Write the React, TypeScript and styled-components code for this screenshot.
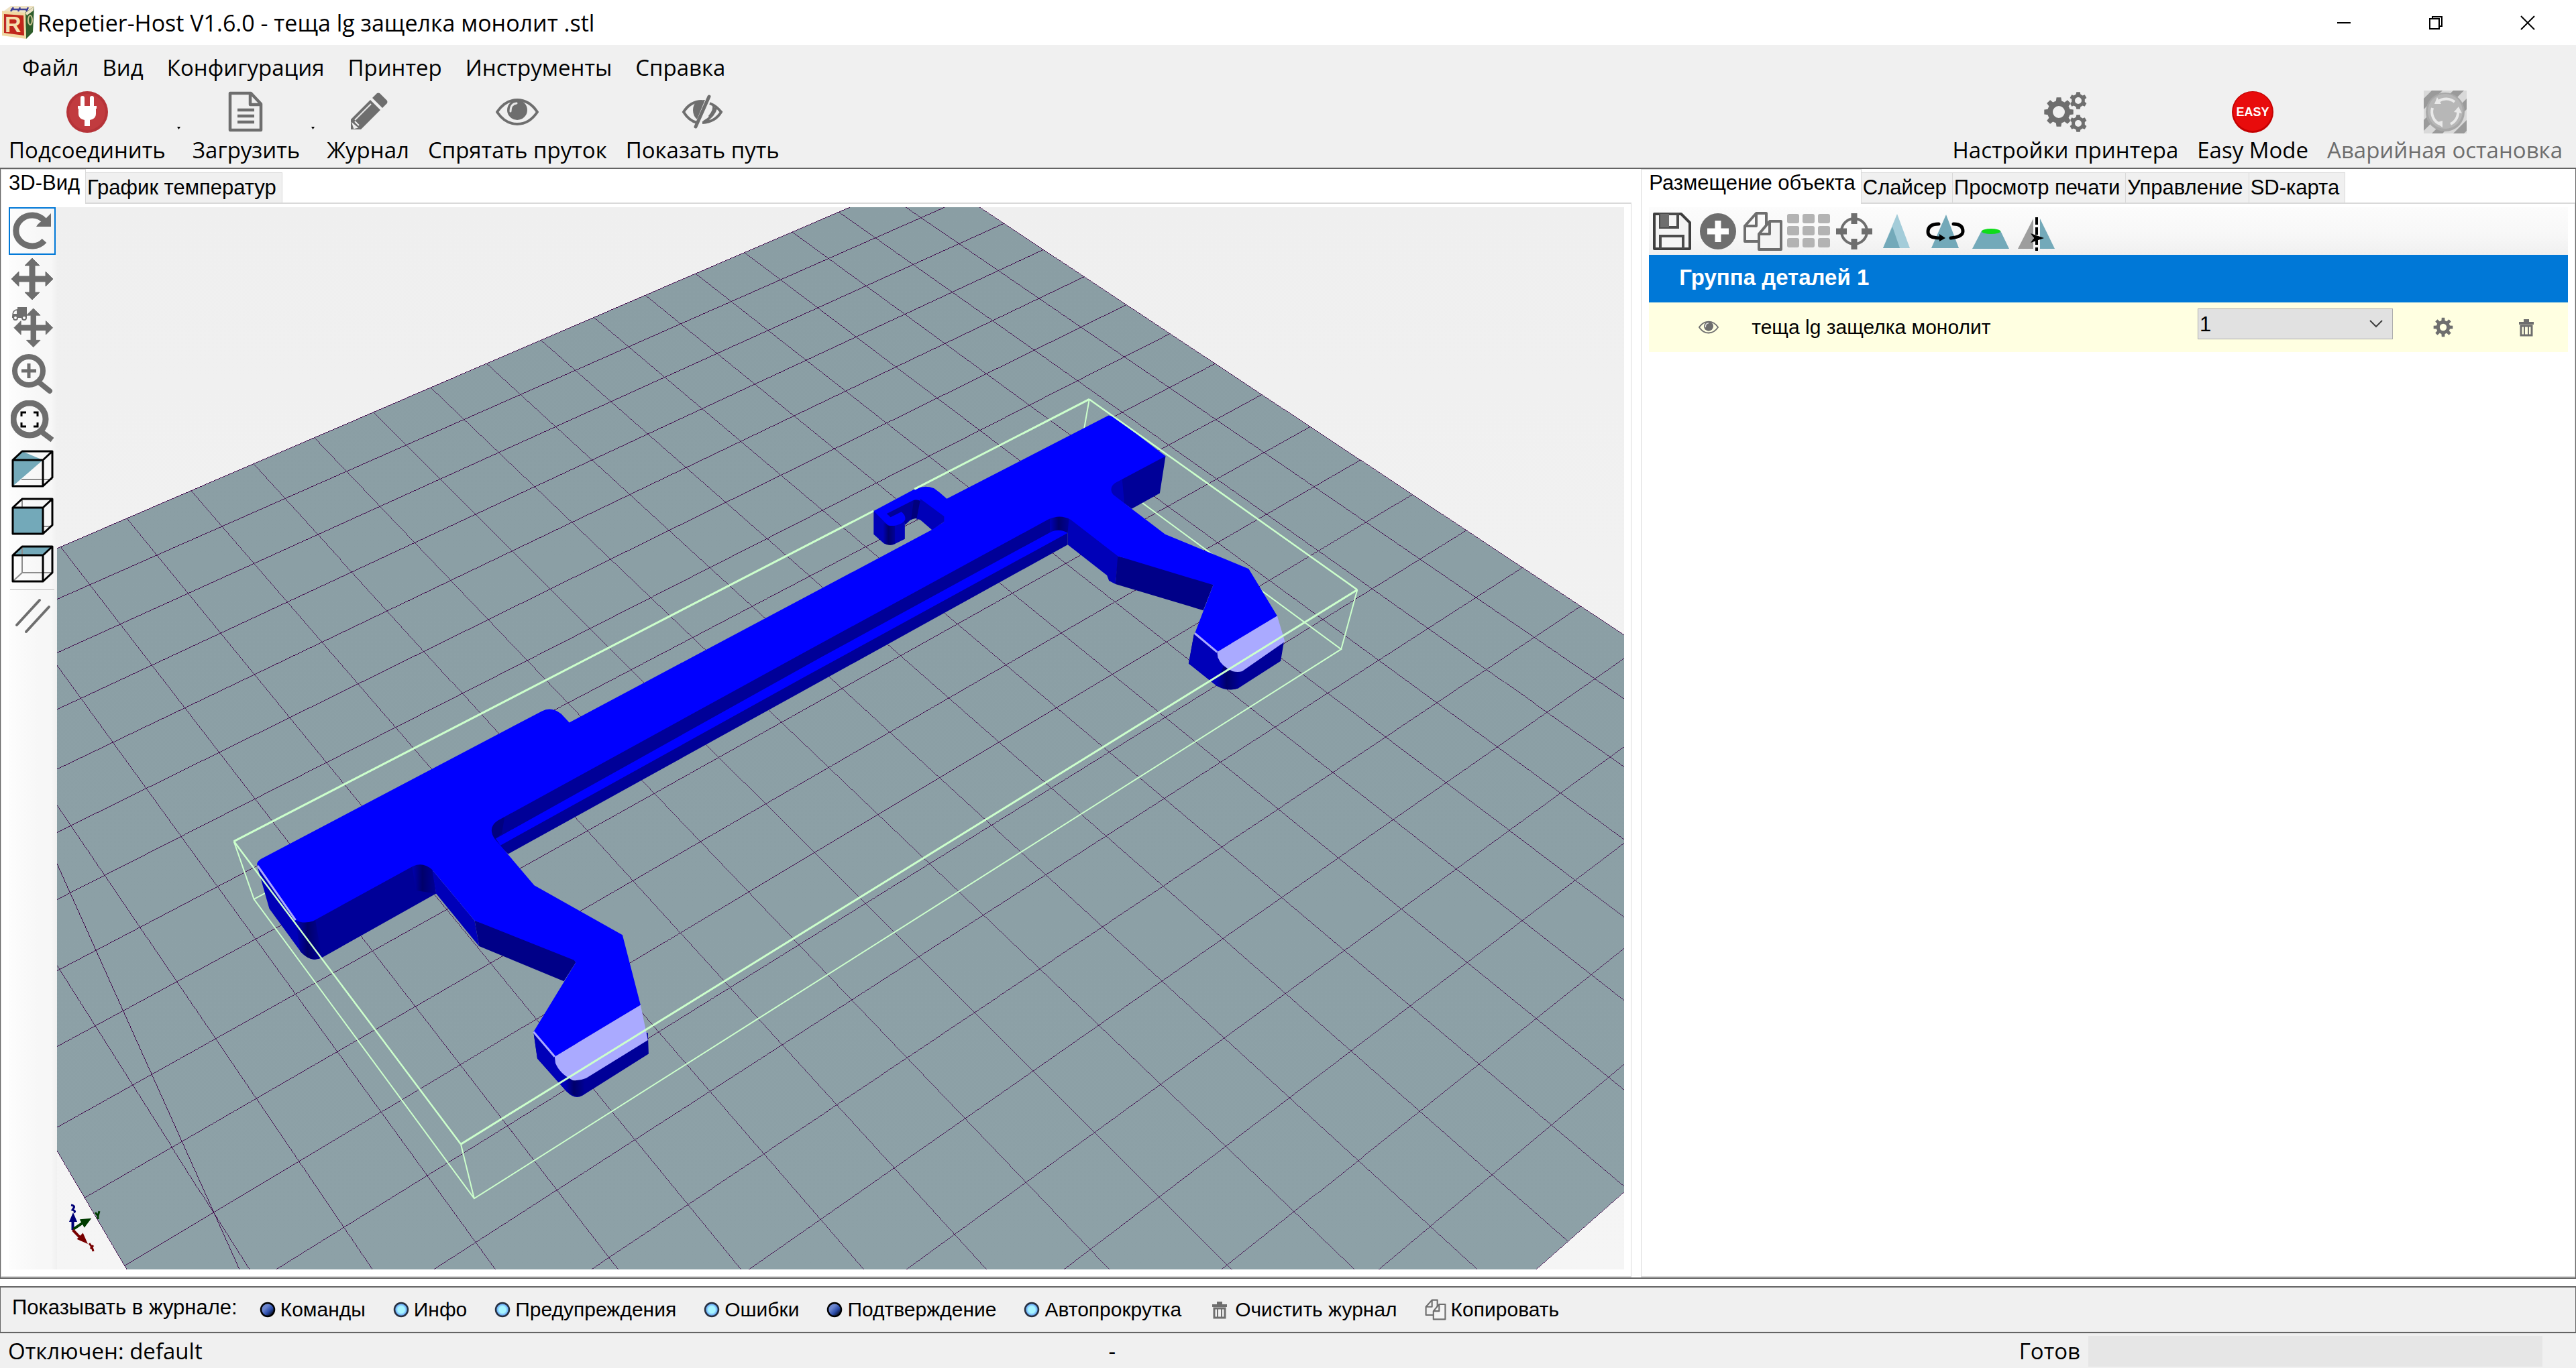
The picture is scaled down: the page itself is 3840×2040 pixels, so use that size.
import React from "react";
import styled, { createGlobalStyle, css } from "styled-components";

const UI_FONT = '"Open Sans", "Noto Sans", sans-serif';
const FORM_FONT = '"Liberation Sans", Arial, sans-serif';
const DARK_LINE = "#646464";
const LIGHT_LINE = "#d9d9d9";
const GRAY = "#6e6e6e";
const TEAL = "#73a9b9";

const GlobalStyle = createGlobalStyle`
  *, *::before, *::after { box-sizing: border-box; }
  body { margin: 0; background: #f0f0f0; color: #000; font-family: ${UI_FONT}; font-size: 33px; }
  button, select { font: inherit; color: inherit; border: 0; padding: 0; margin: 0; background: none; border-radius: 0; }
  svg { display: block; flex: none; }
`;

const Window = styled.div`
  display: flex;
  flex-direction: column;
  width: 100%;
  height: 100vh;
  overflow: hidden;
  white-space: nowrap;
`;

/* ---------- title bar ---------- */

const TitleBar = styled.header`
  display: flex;
  align-items: center;
  flex: none;
  height: 67px;
  padding: 0 4px 0 2px;
  background: #fff;
`;

const Title = styled.h1`
  flex: 1;
  margin: 0;
  padding-left: 3px;
  font-size: 34px;
  font-weight: 400;
  line-height: 68px;
`;

const WindowButton = styled.button`
  display: grid;
  place-items: center;
  width: 137px;
  height: 64px;
`;

/* ---------- menu and main toolbar ---------- */

const MenuBar = styled.nav`
  display: flex;
  flex: none;
  gap: 35px;
  height: 66px;
  padding-left: 33px;
`;

const MenuItem = styled.button`
  line-height: 68px;
`;

const MainToolbar = styled.div`
  display: flex;
  justify-content: space-between;
  flex: none;
  height: 117px;
  padding: 2px 7px 0 0;
`;

const ToolGroup = styled.div`
  display: flex;
  gap: 2px;
`;

const ToolButton = styled.button`
  display: flex;
  flex-direction: column;
  align-items: center;
  padding: 0 13px;
  line-height: 50px;
  &:disabled { color: ${GRAY}; }
`;

const DropArrow = styled.button`
  width: 10px;
  padding-top: 54px;
  align-self: flex-start;
`;

/* ---------- work area ---------- */

const WorkArea = styled.main`
  display: grid;
  grid-template-columns: minmax(0, 2430fr) minmax(0, 1392fr);
  gap: 14px;
  flex: 1;
  min-height: 0;
  border: solid ${DARK_LINE};
  border-width: 2px 1px;
  background: #fff;
`;

const Pane = styled.section`
  display: flex;
  flex-direction: column;
  min-width: 0;
  min-height: 0;
`;

const TabStrip = styled.div`
  display: flex;
  align-items: flex-end;
  flex: none;
  height: 52px;
  font-family: ${FORM_FONT};
  font-size: 31px;
`;

const StripFill = styled.div`
  flex: 1;
  border-bottom: 2px solid ${LIGHT_LINE};
`;

const Tab = styled.button<{ $active?: boolean }>`
  height: 47px;
  padding: 0 8px 0 2px;
  line-height: 42px;
  background: #f0f0f0;
  border: 1px solid ${LIGHT_LINE};
  border-width: 1px 1px 2px 0;
  ${(p) =>
    p.$active &&
    css`
      height: 52px;
      padding: 0 8px 12px 11px;
      line-height: 38px;
      background: #fff;
      border-width: 1px 1px 0 1px;
    `}
`;

const Page = styled.div<{ $column?: boolean }>`
  display: flex;
  flex-direction: ${(p) => (p.$column ? "column" : "row")};
  flex: 1;
  min-height: 0;
  padding: 5px 10px 10px 11px;
  border: 1px solid ${LIGHT_LINE};
  border-width: 0 1px 2px;
`;

const SideBar = styled.div`
  display: flex;
  flex-direction: column;
  flex: none;
  width: 72px;
  background: linear-gradient(90deg, #fdfdfd, #f7f7f7 60%, #f7f7f7 88%, #f0f0f0);
`;

const SideButton = styled.button<{ $on?: boolean }>`
  display: grid;
  place-items: center;
  width: 70px;
  height: 71px;
  border: 2px solid ${(p) => (p.$on ? "#0078d7" : "transparent")};
`;

const SideRule = styled.hr`
  width: 66px;
  margin: 2px;
  border: 0;
  border-top: 1px solid #bdbdbd;
`;

const Viewport = styled.div`
  flex: 1;
  min-width: 0;
  background: linear-gradient(#efefef, #f5f5f5);
  > svg { width: 100%; height: 100%; }
`;

/* ---------- object placement ---------- */

const ObjectToolbar = styled.div`
  display: flex;
  flex: none;
  height: 71px;
  background: linear-gradient(#fcfcfc, #f7f7f7 60%, #f0f0f0);
`;

const ObjectButton = styled.button`
  display: grid;
  place-items: center;
  width: 68px;
`;

const GroupHeader = styled.h2`
  flex: none;
  margin: 0;
  padding: 0 45px;
  color: #fff;
  background: #0078d7;
  font: bold 33px/68px ${FORM_FONT};
  height: 71px;
`;

const ObjectRow = styled.div`
  display: grid;
  grid-template-columns: 128px minmax(0, 1fr) 291px 150px 98px;
  align-items: center;
  flex: none;
  height: 74px;
  padding: 0 13px 0 25px;
  background: #ffffe1;
  font-family: ${FORM_FONT};
  font-size: 30px;
`;

const RowButton = styled.button`
  display: grid;
  place-items: center;
  height: 60px;
`;

const CountBox = styled.div`
  position: relative;
  align-self: start;
  margin-top: 9px;
  > svg { position: absolute; right: 15px; top: 16px; pointer-events: none; }
`;

const CountSelect = styled.select`
  appearance: none;
  width: 100%;
  height: 46px;
  padding: 0 2px;
  border: 1px solid #adadad;
  background: #e1e1e1;
  font-size: 31px;
`;

/* ---------- log bar and status bar ---------- */

const LogBar = styled.div`
  display: flex;
  align-items: center;
  flex: none;
  gap: 41px;
  height: 70px;
  margin-top: 11px;
  padding: 0 17px;
  border: solid ${DARK_LINE};
  border-width: 2px 1px;
  background: #f0f0f0;
  font-family: ${FORM_FONT};
  font-size: 30px;
`;

const LogLabel = styled.span`
  margin-right: -8px;
  padding-bottom: 6px;
  font-size: 31px;
`;

const LogButton = styled.button`
  display: flex;
  align-items: center;
  gap: 7px;
  line-height: 40px;
`;

const StatusBar = styled.footer`
  display: grid;
  grid-template-columns: minmax(0, 1632fr) minmax(0, 1348fr) auto 677px;
  align-items: center;
  column-gap: 12px;
  flex: none;
  height: 52px;
  padding: 0 50px 0 12px;
  border-top: 1px solid #e0e0e0;
  line-height: 50px;
`;

const Progress = styled.progress`
  appearance: none;
  width: 100%;
  height: 46px;
  border: 0;
  background: #e6e6e6;
  &::-webkit-progress-bar { background: #e6e6e6; }
`;

const Below = styled.div`
  flex: none;
  background: #fff;
`;

/* ---------- icons ---------- */

const Svg = ({ s = 64, v = 64, children }: { s?: number; v?: number; children: React.ReactNode }) => (
  <svg width={s} height={s} viewBox={`0 0 ${v} ${v}`} fill="none" aria-hidden="true">
    {children}
  </svg>
);

const LogoIcon = () => (
  <Svg s={51} v={51}>
    <path d="M3 9 L14 1 L49 1 L47 10 L33 12Z" fill="#efe3c6" />
    <path d="M14 6 H40 M18 3 L14 9 M28 3 L25 9 M40 3 L37 9" stroke="#3d3f96" strokeWidth="2.5" />
    <path d="M35 11 L49 2 L47 40 L37 50Z" fill="#2f5d2b" />
    <path d="M36 11 L49 2 L47.500 8 L38 15Z" fill="#efe3c6" />
    <ellipse cx="43" cy="22" rx="3" ry="7" stroke="#c9c08f" strokeWidth="2" />
    <path d="M1 8 L36 11 L37 50 L1 45Z" fill="#f0d9a4" />
    <path d="M4 13 L33 15 L34 45 L4 41Z" fill="#c0271c" />
    <text x="5" y="40" fill="#f6dfae" fontSize="34" fontWeight="700" fontFamily="Liberation Sans, sans-serif">R</text>
  </Svg>
);

const PlugIcon = () => (
  <Svg>
    <circle cx="32" cy="32" r="31" fill="#b63338" />
    <circle cx="32" cy="32" r="27" fill="#c13b3f" />
    <path d="M25 11v14M39 11v14" stroke="#fff" strokeWidth="6" strokeLinecap="round" />
    <path d="M18 23h28v4h-1v8q0 7-9 9v9h-8v-9q-9-2-9-9v-8h-1z" fill="#fff" />
  </Svg>
);

const DocIcon = () => (
  <Svg>
    <path d="M8 4h31l15 16v39H8z M38 4v17h16" stroke={GRAY} strokeWidth="4.500" strokeLinejoin="round" />
    <path d="M19 29h25M19 38h25M19 47h25" stroke={GRAY} strokeWidth="4.500" />
  </Svg>
);

const PencilIcon = () => (
  <Svg>
    <path d="M6 58l0-15 29-29 15 15-29 29z" fill={GRAY} />
    <path d="M38 11l7-7q2-1 4 0l11 11q1 2 0 4l-7 7z" fill={GRAY} />
    <path d="M12 44l24-24" stroke="#e9e9e9" strokeWidth="2" />
    <path d="M9 50l6 5-4 1z M12 46l6 6" fill="#f0f0f0" stroke="#f0f0f0" strokeWidth="2" />
  </Svg>
);

const EyeIcon = ({ s = 64 }: { s?: number }) => (
  <Svg s={s}>
    <path d="M2 32q12-18 30-18t30 18q-12 18-30 18T2 32z" stroke={GRAY} strokeWidth="4" />
    <circle cx="32" cy="29" r="15" fill={GRAY} />
    <path d="M22 31q0-11 9-12" stroke="#e9e9e9" strokeWidth="3" strokeLinecap="round" />
  </Svg>
);

const EyeOffIcon = () => (
  <Svg>
    <path d="M31 16q-17 0-27 16 8 13 20 16M43 19q10 4 17 13-9 15-28 16M53 24q-4 15-19 23" stroke={GRAY} strokeWidth="4" />
    <path d="M36 14q-18 0-18 15 0 9 6 14z" fill={GRAY} />
    <path d="M42 9L22 54" stroke={GRAY} strokeWidth="5" strokeLinecap="round" />
    <path d="M48 21q3 8-6 18" stroke={GRAY} strokeWidth="3" />
  </Svg>
);

const gearPath = (cx: number, cy: number, r: number, n: number, depth: number) => {
  const pts: string[] = [];
  for (let k = 0; k < n; k++) {
    [[-0.32, r - depth], [-0.2, r], [0.2, r], [0.32, r - depth]].forEach(([o, rad]) => {
      const a = ((k + o) / n) * Math.PI * 2 - Math.PI / 2;
      pts.push(`${(cx + Math.cos(a) * rad).toFixed(1)} ${(cy + Math.sin(a) * rad).toFixed(1)}`);
    });
  }
  return `M${pts.join("L")}Z`;
};
const ring = (cx: number, cy: number, r: number) =>
  `M${cx - r} ${cy}a${r} ${r} 0 1 0 ${r * 2} 0a${r} ${r} 0 1 0 ${-r * 2} 0z`;

const GearsIcon = () => (
  <Svg>
    <path
      fillRule="evenodd"
      fill={GRAY}
      d={
        gearPath(22, 32, 22, 8, 5) + ring(22, 32, 9) +
        gearPath(51, 15, 13, 6, 3) + ring(51, 15, 5) +
        gearPath(51, 49, 13, 6, 3) + ring(51, 49, 5)
      }
    />
  </Svg>
);

const GearIcon = () => (
  <Svg s={30}>
    <path fillRule="evenodd" fill={GRAY} d={gearPath(32, 32, 31, 8, 9) + ring(32, 32, 11)} />
  </Svg>
);

const EasyIcon = () => (
  <Svg>
    <circle cx="32" cy="32" r="31" fill="#c40000" />
    <circle cx="32" cy="31" r="29" fill="#e80c0c" />
    <text x="32" y="38" textAnchor="middle" fill="#fff" fontSize="18" fontWeight="700" fontFamily="Liberation Sans, sans-serif">EASY</text>
  </Svg>
);

const StopIcon = () => (
  <Svg>
    <path d="M0 0h64v64H0z" fill="#d9d9d9" />
    <path d="M12 0h16L0 28V12zM44 0h16L0 60V44zM64 12v16L28 64H12zM64 44v16l-4 4H44z" fill="#9a9a9a" />
    <circle cx="32" cy="32" r="29" fill="#a8a8a8" />
    <circle cx="32" cy="31" r="26" fill="#b7b7b7" />
    <path d="M22 16a20 20 0 0 1 24 1M51 29a20 20 0 0 1-11 21M24 50a20 20 0 0 1-11-24" stroke="#e9e9e9" strokeWidth="4" />
    <path d="M16 20l4-10 6 10zM45 32l7-8 5 10zM18 48l10-3 0 10z" fill="#e9e9e9" />
  </Svg>
);

const RotateIcon = () => (
  <Svg>
    <path d="M50 46A24 23 0 1 1 50 16" stroke={GRAY} strokeWidth="9" />
    <path d="M60 5v20H38q4-7 12-10z" fill={GRAY} />
  </Svg>
);

const ARROWS = "M32 1l11 11h-7v16h16v-7l11 11-11 11v-7H36v16h7L32 63 21 52h7V36H12v7L1 32l11-11v7h16V12h-7z";

const MoveIcon = () => (
  <Svg>
    <path d={ARROWS} fill={GRAY} stroke={GRAY} strokeLinejoin="round" />
  </Svg>
);

const MoveObjectIcon = () => (
  <Svg>
    <g transform="translate(4 4) scale(.93)">
      <path d={ARROWS} fill={GRAY} stroke={GRAY} strokeLinejoin="round" />
    </g>
    <path d="M2 17q0-11 8-11V3h14v16H2z" fill={GRAY} />
    <path d="M4 13q1-5 5-5v5z" fill="#f7f7f7" />
    <circle cx="7" cy="19" r="3" fill="#fff" stroke={GRAY} strokeWidth="2" />
    <circle cx="20" cy="19" r="3" fill="#fff" stroke={GRAY} strokeWidth="2" />
  </Svg>
);

const ZoomIcon = () => (
  <Svg>
    <path d="M42 44l16 13" stroke={GRAY} strokeWidth="8" strokeLinecap="round" />
    <circle cx="27" cy="27" r="21" stroke={GRAY} strokeWidth="8" />
    <path d="M27 16v22M16 27h22" stroke={GRAY} strokeWidth="5" />
  </Svg>
);

const FitIcon = () => (
  <Svg>
    <path d="M46 47l16 12" stroke={GRAY} strokeWidth="8" />
    <circle cx="28" cy="28" r="24" stroke={GRAY} strokeWidth="9" />
    <path d="M16 24v-6h7M34 18h6v6M40 33v6h-6M23 39h-7v-6" stroke="#000" strokeWidth="3" />
  </Svg>
);

const CubeIcon = ({ fill, hidden }: { fill: string; hidden: string }) => (
  <Svg>
    <path d={fill} fill={TEAL} />
    <path d={hidden} stroke="#8c8c8c" strokeWidth="2" />
    <path d="M3 18h45v39H3zM3 18L17 5h45L48 18M62 5v39L48 57" stroke="#000" strokeWidth="3" strokeLinejoin="round" />
  </Svg>
);

const SlashesIcon = () => (
  <Svg>
    <path d="M9 46L43 9M23 56L57 19" stroke={GRAY} strokeWidth="4" strokeLinecap="round" />
  </Svg>
);

const SaveIcon = () => (
  <Svg s={60} v={60}>
    <path d="M4 4h40l13 13v39H4z" fill="#f4f4f4" stroke="#3f3f3f" strokeWidth="4" strokeLinejoin="round" />
    <path d="M13 4h26v20H13zM13 56V37h34v19" stroke="#4b4b4b" strokeWidth="4" />
    <path d="M13 4h13v20H13z" fill={GRAY} />
  </Svg>
);

const PlusIcon = () => (
  <Svg s={60} v={60}>
    <circle cx="31" cy="30" r="27" fill={GRAY} />
    <path d="M31 14v32M15 30h32" stroke="#fff" strokeWidth="9" />
  </Svg>
);

const CopyIcon = ({ s = 60 }: { s?: number }) => (
  <Svg s={s} v={60}>
    <path d="M24 45H3V22L20 3h15v20M20 3v19H3" stroke={GRAY} strokeWidth="4" strokeLinejoin="round" />
    <path d="M24 34L40 15h17v42H24zM40 15v19H24" fill="#f4f4f4" stroke={GRAY} strokeWidth="4" strokeLinejoin="round" />
  </Svg>
);

const GridIcon = () => (
  <Svg s={64}>
    {[6, 24, 42].map((y) =>
      [0, 23, 46].map((x) => <rect key={`${x}-${y}`} x={x} y={y} width="18" height="14" rx="3" fill="#b3b3b3" />),
    )}
  </Svg>
);

const TargetIcon = () => (
  <Svg s={60} v={60}>
    <circle cx="30" cy="30" r="19" stroke={GRAY} strokeWidth="4" />
    <path d="M30 3v16M30 41v16M3 30h16M41 30h16" stroke={GRAY} strokeWidth="9" />
  </Svg>
);

const ScaleIcon = () => (
  <Svg s={60} v={60}>
    <path d="M26 4L5 55h40z" fill="#a3ccd9" />
    <path d="M19 23L5 55h25z" fill={TEAL} />
  </Svg>
);

const SpinIcon = () => (
  <Svg s={60} v={60}>
    <path d="M31 5L9 55h41z" fill={TEAL} />
    <path d="M20 19q-16 0-16 12 0 9 19 9M42 19q14 0 14 11 0 8-18 10" stroke="#000" strokeWidth="5" strokeLinecap="round" />
    <path d="M21 34l9 6-9 5z" fill="#000" />
  </Svg>
);

const CutIcon = () => (
  <Svg s={60} v={60}>
    <path d="M16 29h28l13 27H2z" fill={TEAL} />
    <ellipse cx="30" cy="30" rx="14" ry="4" fill="#0fdc1a" />
  </Svg>
);

const MirrorIcon = () => (
  <Svg s={60} v={60}>
    <path d="M25 11v45H2z" fill="#9d9d9d" />
    <path d="M35 11v45h22z" fill={TEAL} />
    <path d="M30 9v50" stroke="#000" strokeWidth="4" strokeDasharray="11 4" />
    <path d="M21 33l20 7-20 7 5-7z" fill="#000" />
  </Svg>
);

const TrashIcon = () => (
  <Svg s={32} v={32}>
    <path d="M5 8h22v4H5zM12 4h8v4h-8z" fill={GRAY} />
    <path d="M8 14h16v14H8z" stroke={GRAY} strokeWidth="3" />
    <path d="M13 15v12M19 15v12" stroke={GRAY} strokeWidth="2" />
  </Svg>
);

const Lamp = ({ on }: { on?: boolean }) => (
  <Svg s={24} v={24}>
    <defs>
      <radialGradient id="lampOn">
        <stop offset="50%" stopColor="#a6f4ff" />
        <stop offset="100%" stopColor="#4f86f5" />
      </radialGradient>
      <linearGradient id="lampOff" x1="0" y1="0" x2="1" y2="1">
        <stop offset="35%" stopColor="#6c86cf" />
        <stop offset="60%" stopColor="#2d4fae" />
        <stop offset="90%" stopColor="#000" />
      </linearGradient>
    </defs>
    <circle cx="12" cy="12" r="10" fill={on ? "url(#lampOn)" : "url(#lampOff)"} stroke={on ? "#27303f" : "#000"} strokeWidth="2.500" />
  </Svg>
);

/* ---------- 3D view ---------- */

/* Perspective of the print bed: cell coordinates (i, j) to view pixels. */
type Point = [number, number];
const project = (i: number, j: number): Point => {
  const u = (i + 1) / 17;
  const v = (j - 3) / 10;
  const w = 1 + 0.27425 * u - 0.20603 * v;
  return [(1861.1 * u + 442.4 * v + 120.6) / w, (-566.8 * u + 429.6 * v + 1041.3) / w];
};
const FIRST = -4;
const CELLS = 20;
const LAST = FIRST + CELLS;
const bedLines: [Point, Point][] = [];
for (let k = 0; k <= CELLS; k++) {
  bedLines.push([project(FIRST + k, 0), project(FIRST + k, CELLS)]);
  bedLines.push([project(FIRST, k), project(LAST, k)]);
}
bedLines.push([[85, 1288], [357, 1893]]);
const bedOutline = [project(FIRST, 0), project(LAST, 0), project(LAST, CELLS), project(FIRST, CELLS)].join(" ");

/* A slanted line of this width covers one pixel on each step along its longer axis. */
const hairline = ([[x1, y1], [x2, y2]]: [Point, Point]) => {
  const dx = Math.abs(x2 - x1);
  const dy = Math.abs(y2 - y1);
  return Math.max(dx, dy) / Math.hypot(dx, dy);
};

const BLUE = "#0000ff";
const SIDE = "#0000b8";
const FRONT = "#000098";
const DEEP = "#000088";
const TIP = "#aaaaff";

const Scene = () => (
  <svg viewBox="85 309 2336 1584" preserveAspectRatio="xMidYMid slice" fill="none" role="img" aria-label="3D-Вид">
    <defs>
      <linearGradient id="bed" x1="0" y1="309" x2="0" y2="1893" gradientUnits="userSpaceOnUse">
        <stop offset="0" stopColor="#8a9ea4" />
        <stop offset="1" stopColor="#8da1a7" />
      </linearGradient>
      <linearGradient id="round">
        <stop offset="0" stopColor={SIDE} />
        <stop offset=".45" stopColor="#00006a" />
        <stop offset="1" stopColor={FRONT} />
      </linearGradient>
    </defs>
    <polygon points={bedOutline} fill="url(#bed)" />
    {bedLines.map((l, n) => (
      <line
        key={n}
        x1={l[0][0]}
        y1={l[0][1]}
        x2={l[1][0]}
        y2={l[1][1]}
        stroke="#3c0046"
        strokeWidth={hairline(l)}
        shapeRendering="crispEdges"
      />
    ))}

    {/* lower edges of the selection box */}
    <path d="M348.600 1254.600L378.500 1340.800L706.800 1787.200L1999 968.200L1608.700 680.800L378.500 1340.800M1623.600 595.500L1608.700 680.800M706.800 1787.200L686.900 1706.100M1999 968.200L2023.100 879.600" stroke="#ccffcc" strokeWidth="2" />

    {/* side walls */}
    <path d="M383 1290L401.400 1355L449 1420.300Q460 1431 468 1430.600L466 1374L440 1368Z" fill={SIDE} />
    <path d="M464 1370L468 1430.600Q474 1431 480 1428L650 1332.500L644 1284H610Z" fill={FRONT} />
    <path d="M440.500 1372.100Q455 1377 470 1372L480 1428Q462 1436 447 1418Z" fill="url(#round)" />
    <path d="M613 1284H640L644.200 1297.100L650 1332.500L620 1328Z" fill="url(#round)" />
    <path d="M644.200 1297.100L650 1332.500L705 1400L714.200 1411L707.400 1372.700Z" fill={SIDE} />
    <path d="M707.400 1372.700L714.200 1411L840.500 1463.200L858.300 1435.300L850 1420Z" fill={DEEP} />
    <path d="M795.200 1538.700L800.900 1578.400L845.100 1628.200Q856.600 1640 868.100 1633.600L966.800 1571.400L965.700 1540L830 1560Z" fill={FRONT} />
    <path d="M795.200 1538.700L800.900 1578.400L845.100 1628.200L851 1605L828 1572Z" fill={SIDE} />
    <path d="M845 1604L872 1606L870 1632.500Q856 1639 842 1624Z" fill="url(#round)" />

    <path d="M1645 728L1686.800 758.800L1728.700 735.500L1737.300 680.400L1690 690Z" fill={FRONT} />
    <path d="M1645 727L1672 708L1676 752L1659 740Z" fill={SIDE} />
    <path d="M1591.500 764L1591.500 812.300L1650 858L1653 866L1662.600 871L1668 822Z" fill={SIDE} />
    <path d="M1666.100 829.400L1662.600 871L1793.500 910.200L1808.400 872.300L1790 860Z" fill={DEEP} />
    <path d="M1779.700 945.700L1771.700 989.400L1814.200 1023.300Q1831 1032 1845.800 1026.200L1908.900 985.800L1914 955L1830 960Z" fill={FRONT} />
    <path d="M1779.700 945.700L1771.700 989.400L1814.200 1023.300L1826 994L1814 970Z" fill={SIDE} />
    <path d="M1824 992L1848 998L1846 1026.200Q1831 1032 1812 1021Z" fill="url(#round)" />

    {/* recessed rail between the arms */}
    <path d="M730 1220L1561.600 765L1591.500 764L1591.500 812.300L757.300 1273.600L722 1240Z" fill={FRONT} />
    <path d="M1565 764L1594 764L1591.500 794.700L1565 793Z" fill="url(#round)" />
    <path d="M724 1240L741.800 1219L752 1219L748 1243L738 1251Z" fill="#000080" />
    <path d="M739 1250.500L1224 980L1567.400 792.700Q1580 788 1591.500 794.700L1200 1009L745.800 1260.700Z" fill={BLUE} />

    {/* clip on the back edge */}
    <path d="M1302.200 762V796.800L1317 810Q1326 815 1334 811L1348.700 803.700V774L1330 770Z" fill={SIDE} />
    <path d="M1316 780L1334 782V811Q1326 815 1317 810Z" fill="url(#round)" />
    <path d="M1357.900 745L1317 764L1327.400 773L1343.500 764L1349.200 782.500L1356 776Q1366 770 1372.200 775.500L1389.400 790.600L1412 774L1372 744Z" fill={SIDE} />
    <path d="M1363 742L1317 764L1327.400 773L1343.500 764L1349.200 782.500L1356 776Q1361 772 1366 773L1372 745Z" fill={FRONT} />
    <path d="M1362 745H1372V775Q1366 771 1358 775Z" fill="#00007c" />
    <path d="M1302.200 762L1363.600 729.400Q1378 723 1392.300 728.200L1400.900 734.700L1411.200 743.700L1422 760L1407.200 781L1407.200 776.400L1372.200 747Q1364 743 1357.900 747.800L1321.700 766.100L1327.400 771.400L1343.500 763.300Q1350 768 1349.200 775Q1347 780 1336.600 783.300Q1329 785 1323.400 783.300Z" fill={BLUE} />

    {/* top face */}
    <path
      d="M383 1289Q383 1285 388.800 1281L807.800 1060.400Q822 1053 836.500 1064.600L848.600 1077.500L1031.700 980L1200 890.600L1389.400 789.800L1407.200 778V746L1411.200 743.700L1652.300 619.600L1660.300 621.200L1737.300 680.400L1662.100 720.400Q1652 728 1659.200 737.600L1686.800 758.800L1736.700 796.800L1861.200 848.200L1903.700 918.400L1814.200 972.300L1780.900 944.500L1808.400 872.300L1666.100 829.400L1596 775.100Q1580 766 1561.600 775.100L1200 972.300L741.800 1223.700Q726 1234 737.800 1251.600L745.800 1260.700L796.300 1320.200L927.800 1394.100L954.800 1498.600L826.800 1575.700L795.200 1538.700L858.300 1435.300L855.500 1431.600L707.400 1372.700L644.200 1297.100Q631 1285 615.500 1291.800L466.300 1373.700Q452 1378 440.500 1372.100Z"
      fill={BLUE}
    />
    <path d="M1389.400 789.800L1407.200 778V770L1372 744L1366 775Q1370 773 1373 776Z" fill={SIDE} />
    <path d="M954.800 1498.600L826.800 1575.700L827.900 1585.300Q834 1601 853.700 1611Q864 1612 873.800 1607.800L965.700 1551Z" fill={TIP} />
    <path d="M1903.700 918.400L1814.200 972.300L1815.300 980.400Q1820 993 1837.100 1000.900Q1845 1003 1851.500 1000.900L1915.200 956.800Z" fill={TIP} />
    <path d="M795.200 1538.700L826.800 1575.700M1780.900 944.500L1814.200 972.300M384 1291L440.500 1372.100" stroke={TIP} strokeWidth="3" />

    {/* upper edges of the selection box */}
    <path d="M1623.600 595.500L2023.100 879.600M348.600 1254.600L686.900 1706.100" stroke="#ccffcc" strokeWidth="2.500" />
    <path d="M348.600 1254.600L1302 762M1363 729.400L1623.600 595.500M2023.100 879.600L686.900 1706.100" stroke="#ccffcc" strokeWidth="3" />

    {/* axis marker */}
    <path d="M108.500 1834V1817M106 1820L109 1813L112 1820Z" stroke="#000078" fill="#000078" strokeWidth="4" />
    <path d="M106 1797q6 1 4 4t-2 3q6 2 2 4" stroke="#000078" strokeWidth="3" />
    <path d="M109 1833L124 1823M122 1820L132 1819L126 1827Z" stroke="#003c00" fill="#003c00" strokeWidth="4" />
    <path d="M142 1808l4 5 2-7M146 1813v5" stroke="#003c00" strokeWidth="3" />
    <path d="M108.500 1834L120 1846M118 1847L127 1851L123 1842Z" stroke="#780000" fill="#780000" strokeWidth="4" />
    <path d="M133 1854q5 6 6 12M139 1857l-4 5" stroke="#780000" strokeWidth="3" />
  </svg>
);

/* ---------- data ---------- */

const menus = ["Файл", "Вид", "Конфигурация", "Принтер", "Инструменты", "Справка"];
const rightTabs = ["Слайсер", "Просмотр печати", "Управление", "SD-карта"];

const sideTools = [
  { name: "Вращать", icon: <RotateIcon />, on: true },
  { name: "Переместить вид", icon: <MoveIcon /> },
  { name: "Переместить объект", icon: <MoveObjectIcon /> },
  { name: "Масштаб", icon: <ZoomIcon /> },
  { name: "Вписать", icon: <FitIcon /> },
  { name: "Изометрия", icon: <CubeIcon fill="M3 18h45L3 57zM3 18L17 5 48 18z" hidden="M16 47h46" /> },
  { name: "Вид спереди", icon: <CubeIcon fill="M3 18h45v39H3z" hidden="M17 5v13M48 46h14" /> },
  { name: "Вид сверху", icon: <CubeIcon fill="M3 18L17 5h45L48 18z" hidden="M17 5v39h45M17 44L3 57" /> },
];

const objectTools = [
  { name: "Сохранить", icon: <SaveIcon /> },
  { name: "Добавить", icon: <PlusIcon /> },
  { name: "Дублировать", icon: <CopyIcon /> },
  { name: "Расставить", icon: <GridIcon /> },
  { name: "По центру", icon: <TargetIcon /> },
  { name: "Масштабировать", icon: <ScaleIcon /> },
  { name: "Повернуть", icon: <SpinIcon /> },
  { name: "Разрезать", icon: <CutIcon /> },
  { name: "Отразить", icon: <MirrorIcon /> },
];

const logFilters = [
  { name: "Команды", on: false },
  { name: "Инфо", on: true },
  { name: "Предупреждения", on: true },
  { name: "Ошибки", on: true },
  { name: "Подтверждение", on: false },
  { name: "Автопрокрутка", on: true },
];

const Arrow = () => (
  <svg width="9" height="5" viewBox="0 0 9 5" aria-hidden="true">
    <path d="M2 0h5L4.500 4z" fill="#000" />
  </svg>
);

export default function App() {
  return (
    <Window>
      <GlobalStyle />
      <TitleBar>
        <LogoIcon />
        <Title>Repetier-Host V1.6.0 - теща lg защелка монолит .stl</Title>
        <WindowButton aria-label="Свернуть">
          <Svg s={24} v={24}><path d="M2 12h20" stroke="#000" strokeWidth="2" /></Svg>
        </WindowButton>
        <WindowButton aria-label="Восстановить">
          <Svg s={24} v={24}><path d="M3 6h14v15H3zM7 6V3h14v14h-4" stroke="#000" strokeWidth="2" /></Svg>
        </WindowButton>
        <WindowButton aria-label="Закрыть">
          <Svg s={24} v={24}><path d="M2 2l20 20M22 2L2 22" stroke="#000" strokeWidth="2" /></Svg>
        </WindowButton>
      </TitleBar>

      <MenuBar>
        {menus.map((m) => (
          <MenuItem key={m}>{m}</MenuItem>
        ))}
      </MenuBar>

      <MainToolbar>
        <ToolGroup>
          <ToolButton><PlugIcon />Подсоединить</ToolButton>
          <DropArrow aria-label="Выбрать порт"><Arrow /></DropArrow>
          <ToolButton><DocIcon />Загрузить</ToolButton>
          <DropArrow aria-label="Недавние файлы"><Arrow /></DropArrow>
          <ToolButton><PencilIcon />Журнал</ToolButton>
          <ToolButton><EyeIcon />Спрятать пруток</ToolButton>
          <ToolButton><EyeOffIcon />Показать путь</ToolButton>
        </ToolGroup>
        <ToolGroup>
          <ToolButton><GearsIcon />Настройки принтера</ToolButton>
          <ToolButton><EasyIcon />Easy Mode</ToolButton>
          <ToolButton disabled><StopIcon />Аварийная остановка</ToolButton>
        </ToolGroup>
      </MainToolbar>

      <WorkArea>
        <Pane>
          <TabStrip role="tablist">
            <Tab role="tab" aria-selected="true" $active>3D-Вид</Tab>
            <Tab role="tab" aria-selected="false">График температур</Tab>
            <StripFill />
          </TabStrip>
          <Page>
            <SideBar>
              {sideTools.map((t) => (
                <SideButton key={t.name} $on={t.on} aria-label={t.name}>{t.icon}</SideButton>
              ))}
              <SideRule />
              <SideButton aria-label="Параллельная проекция"><SlashesIcon /></SideButton>
            </SideBar>
            <Viewport><Scene /></Viewport>
          </Page>
        </Pane>

        <Pane>
          <TabStrip role="tablist">
            <Tab role="tab" aria-selected="true" $active>Размещение объекта</Tab>
            {rightTabs.map((t) => (
              <Tab key={t} role="tab" aria-selected="false">{t}</Tab>
            ))}
            <StripFill />
          </TabStrip>
          <Page $column>
            <ObjectToolbar>
              {objectTools.map((t) => (
                <ObjectButton key={t.name} aria-label={t.name}>{t.icon}</ObjectButton>
              ))}
            </ObjectToolbar>
            <GroupHeader>Группа деталей 1</GroupHeader>
            <ObjectRow>
              <RowButton aria-label="Показать объект"><EyeIcon s={30} /></RowButton>
              <label htmlFor="count">теща lg защелка монолит</label>
              <CountBox>
                <CountSelect id="count" defaultValue="1">
                  <option>1</option>
                  <option>2</option>
                </CountSelect>
                <svg width="20" height="13" viewBox="0 0 20 13" fill="none" aria-hidden="true">
                  <path d="M1 2l9 9 9-9" stroke="#404040" strokeWidth="2" />
                </svg>
              </CountBox>
              <RowButton aria-label="Настройки объекта"><GearIcon /></RowButton>
              <RowButton aria-label="Удалить объект"><TrashIcon /></RowButton>
            </ObjectRow>
          </Page>
        </Pane>
      </WorkArea>

      <Below>
        <LogBar>
          <LogLabel>Показывать в журнале:</LogLabel>
          {logFilters.map((f) => (
            <LogButton key={f.name} aria-pressed={f.on}><Lamp on={f.on} />{f.name}</LogButton>
          ))}
          <LogButton><TrashIcon />Очистить журнал</LogButton>
          <LogButton><CopyIcon s={32} />Копировать</LogButton>
        </LogBar>
      </Below>

      <StatusBar>
        <span>Отключен: default</span>
        <span>-</span>
        <label htmlFor="job">Готов</label>
        <Progress id="job" value={0} max={100} />
      </StatusBar>
    </Window>
  );
}
